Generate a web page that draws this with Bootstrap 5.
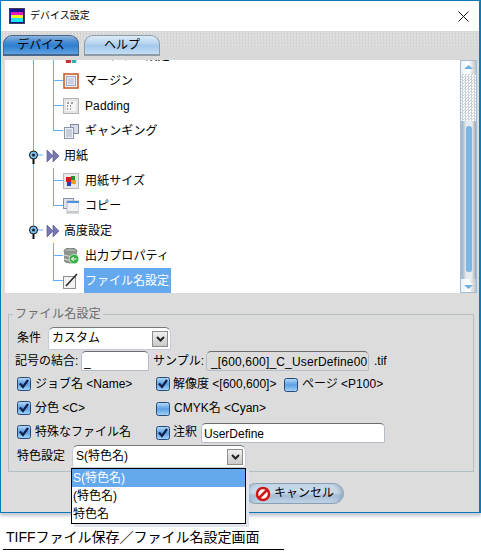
<!DOCTYPE html>
<html lang="ja">
<head>
<meta charset="utf-8">
<title>デバイス設定</title>
<link href="https://cdn.jsdelivr.net/npm/bootstrap@5.3.0/dist/css/bootstrap.min.css" rel="stylesheet">
<style>
html,body{margin:0;background:#fff}
body{width:481px;height:555px;overflow:hidden;font:12px/1.2 "Liberation Sans","Noto Sans CJK JP",sans-serif;color:#000}
.win{width:481px;height:513px;border:1px solid #0c78b4;border-right-width:2px;background:#dcdcdc;position:relative;box-shadow:0 3px 3px #c3c8d4}
.ttl{height:30px;background:#fff;padding-left:8px;gap:5px;font-size:10px}
.xbtn{margin-left:auto;margin-right:10px;width:11px;height:11px;display:block}
.tabbar{height:29px;padding:4px 0 0 2px;gap:5px;background:repeating-conic-gradient(#d3d3d3 0 25%,#e2e2e2 0 50%) 0 0/3px 3px;box-shadow:inset 0 -15px 0 #d9d9d9}
.tabx{width:76px;height:21px;border:1px solid #8e9ca8;border-bottom-width:2px;border-radius:9px 9px 0 0;font-size:12px;text-align:center;line-height:18px;background:linear-gradient(#dcecf8 0,#bcd8f0 35%,#a3c8ec 55%,#c4def4 100%)}
.tabx.on{background:linear-gradient(#8fb4dc 0,#4a8fd4 30%,#2f7fd0 55%,#5fa2e2 100%);border-color:#48678a}
.body{height:233px;padding:0 0 0 4px}
.tree{width:455px;background:#fff;overflow:hidden}
.trow{height:25px;display:flex;align-items:center;flex:none}
.trow:first-child{margin-top:-17px}
.trunk{background:linear-gradient(#62aef2,#62aef2) 28px 0/1px 100% no-repeat}
.trunk-b{background:linear-gradient(#62aef2,#62aef2) 28px 0/1px 50% no-repeat}
.elb{width:10px;height:25px;margin-left:48px;flex:none;background:linear-gradient(#62aef2,#62aef2) 0 0/1px 100% no-repeat,linear-gradient(#62aef2,#62aef2) 0 12px/100% 1px no-repeat}
.elb.end{background:linear-gradient(#62aef2,#62aef2) 0 0/1px 13px no-repeat,linear-gradient(#62aef2,#62aef2) 0 12px/100% 1px no-repeat}
.ic{width:16px;height:16px;flex:none;display:block}
.kid{height:25px;line-height:27px;margin-left:6px;letter-spacing:.1px}
.sel{background:#64a8ee;color:#fff;padding:0 2px 0 1px;margin-left:5px;letter-spacing:0}
.hnd{width:16px;height:16px;margin-left:22px;flex:none;display:block}
.tri{width:14px;height:14px;margin-left:3px;flex:none;display:block}
.par{margin-left:4px;line-height:27px;height:25px}
.sbar{width:17px;border:1px solid #a4bdd2}
.sbtn{height:13px;background:linear-gradient(90deg,#eef3f7,#fff 50%,#b8c4cc);flex:none;display:flex;align-items:center;justify-content:center}
.strack{height:47px;flex:none;background:repeating-conic-gradient(#c9d2da 0 25%,#fff 0 50%) 0 0/3px 3px}
.sthumb{flex:1;background:linear-gradient(90deg,#9db3c6,#e6ebef 30%,#e6ebef 70%,#9aa8b2);padding:5px 4px 7px;border-left:1px solid #a4bdd2}
.sgrip{height:100%;width:6px;background:#7ab6e6;border-radius:3px 3px 2px 2px;margin:0 auto}
.fs{margin:14px 6px 0 7px;height:165px;width:466px;border:1px solid #b3bfc4;padding:0 0 0 8px;position:relative;min-width:0}
.fs legend{float:none;width:auto;margin:0 0 0 -4px;padding:0 2px;font-size:12px;line-height:14px;color:#6b6b6b;display:block;letter-spacing:.3px}
.frow{display:flex;align-items:center;flex:none}
.fld{background:#fff;border:1px solid #b4bcc8;border-top-color:#6c6c6c;border-radius:5px 5px 2px 2px;height:20px;line-height:20px;padding:0 2px}
.drp{background:#fff;border:1px solid #c4ccdc;border-top-color:#777;border-radius:6px 6px 2px 2px;height:23px;display:flex;align-items:center;justify-content:space-between;padding:0 1px 0 3px}
.drp-btn{width:16px;height:16px;border:1px solid #8c8c8c;background:linear-gradient(#f0f0f0,#c9c9c9);display:flex;align-items:center;justify-content:center;flex:none;margin-right:1px}
.ckb{width:14px;height:14px;flex:none;display:block}
.cklab{margin-left:4px;white-space:nowrap}
.cklab2{margin-left:3px;white-space:nowrap}
.c1{width:139px;display:flex;align-items:center;flex:none}
.c2{width:128px;display:flex;align-items:center;flex:none}
.r1{margin-top:6px}
.r2{margin-top:1px;margin-left:-2px}
.r3{margin-top:4px;height:19px}
.r4{margin-top:5px;height:19px}
.r6{margin-top:3px}
.lab1{width:31px}
.lab2{width:66px;white-space:nowrap}
.lab3{margin:0 2px 0 4px;white-space:nowrap}
.lab6{width:55px}
.wf1{width:123px}
.wf2{width:68px}
.wf3{width:163px;background:#dcdcdc;letter-spacing:.17px;white-space:nowrap;padding:0 1px 0 4px;overflow:hidden}
.wf4{width:184px;margin-left:4px}
.wf5{width:174px}
.tifx{margin-left:5px}
.foot{margin-top:11px;padding-left:244px}
.pill{height:21px;width:99px;border:1px solid #8b9fb2;border-radius:11px;background:linear-gradient(#c4d6e8,#c8dae9 45%,#a5bed6 62%,#c2d6e8);box-shadow:inset 5px 0 4px -3px #8da7c0,inset -5px 0 4px -3px #8da7c0;font-size:12px;display:flex;align-items:center;justify-content:center;gap:3px}
.menu{position:absolute;left:70px;top:467px;width:175px;height:56px;border:1px solid #000;background:#fff;box-shadow:3px 3px 0 #dfe3ee;line-height:18px;font-size:12px}
.mi{height:18px;padding-left:1px}
.mi.act{background:#64a8ee;color:#fff}
.cap{margin:15px 0 0 3px;width:281px;height:22px;border-bottom:1px solid #000;padding-left:3px;font-size:14px;line-height:19px;white-space:nowrap}
</style>
</head>
<body>
<div class="win">
  <div class="ttl d-flex align-items-center">
    <svg class="ic" viewBox="0 0 16 16"><rect width="16" height="16" fill="#3c3c5c"/><rect x="1" y="1" width="14" height="14" fill="#14148c"/><rect x="2" y="4" width="12" height="3" fill="#e818c0"/><rect x="2" y="7" width="12" height="3" fill="#f4f020"/><rect x="2" y="10" width="12" height="4" fill="#18e8f0"/></svg>
    <span>デバイス設定</span>
    <svg class="xbtn" viewBox="0 0 11 11"><path d="M.5.5l10 10M10.500.5l-10 10" stroke="#111" fill="none"/></svg>
  </div>
  <div class="tabbar d-flex">
    <div class="tabx on">デバイス</div>
    <div class="tabx">ヘルプ</div>
  </div>
  <div class="body d-flex">
    <div class="tree d-flex flex-column">
      <div class="trow trunk"><span class="elb"></span><svg class="ic" viewBox="0 0 16 16"><rect x="2" y="2" width="12" height="12" fill="#d8d8d8"/><rect x="3" y="11" width="5" height="4" fill="#d03030"/><rect x="9" y="11" width="4" height="4" fill="#30b0b0"/></svg><span class="kid">レイアウト設定</span></div>
      <div class="trow trunk"><span class="elb"></span><svg class="ic" viewBox="0 0 16 16"><rect x="1" y="1" width="14" height="14" fill="#f4f0ec" stroke="#c8602c" stroke-width="1.600"/><rect x="3.500" y="3.500" width="9" height="9" fill="#e4e8f4" stroke="#a0a8c4"/><path d="M5 6h6M5 8h6M5 10h6" stroke="#b4bad0"/></svg><span class="kid">マージン</span></div>
      <div class="trow trunk"><span class="elb"></span><svg class="ic" viewBox="0 0 16 16"><rect x=".5" y=".5" width="15" height="15" fill="#e4e4e4" stroke="#b4b4b4"/><rect x="3" y="3" width="10" height="10" fill="#f6f6f6"/><path d="M4 5h2M8 5h2M4 8h1M7 8h1M4 11h1M7 11h1" stroke="#444"/></svg><span class="kid">Padding</span></div>
      <div class="trow trunk"><span class="elb end"></span><svg class="ic" viewBox="0 0 16 16"><rect x="7.500" y="1.500" width="8" height="9" fill="#d8dce8" stroke="#80889c"/><rect x="1.500" y="4.500" width="9" height="11" fill="#eef0f6" stroke="#8c94a8"/><path d="M3 7h6M3 9h6M3 11h6M3 13h6" stroke="#a0a8c0"/></svg><span class="kid">ギャンギング</span></div>
      <div class="trow trunk">
        <svg class="hnd" viewBox="0 0 16 16"><path d="M6.500 10v6" stroke="#111" stroke-width="2"/><circle cx="6.500" cy="7" r="4" fill="#7ec0f0" stroke="#111"/><circle cx="6.500" cy="7" r="1.500" fill="#123"/><path d="M11 7h5" stroke="#62aef2"/></svg>
        <svg class="tri" viewBox="0 0 14 14"><path d="M1 1v12l6-6zM7 1v12l6-6z" fill="#7878b0" stroke="#5c5c94" stroke-width=".7"/></svg>
        <span class="par">用紙</span>
      </div>
      <div class="trow trunk"><span class="elb"></span><svg class="ic" viewBox="0 0 16 16"><rect x=".5" y=".5" width="15" height="15" fill="#e8e8e8" stroke="#b8b8b8"/><rect x="3" y="4" width="5" height="5" fill="#d81818"/><rect x="8" y="3" width="4" height="4" fill="#2c8c30"/><rect x="8" y="7" width="5" height="4" fill="#f0a020"/><rect x="4" y="9" width="4" height="4" fill="#2040c0"/></svg><span class="kid">用紙サイズ</span></div>
      <div class="trow trunk"><span class="elb end"></span><svg class="ic" viewBox="0 0 16 16"><rect x=".5" y=".5" width="10" height="10" fill="#dfe2ec" stroke="#8890a8"/><rect x="4" y="3" width="12" height="12" fill="#f2f2f4" stroke="#b4b8c8"/><rect x="4" y="3" width="12" height="2" fill="#5090e0"/><rect x="5" y="13" width="10" height="2" fill="#c8c8c8"/></svg><span class="kid">コピー</span></div>
      <div class="trow trunk-b">
        <svg class="hnd" viewBox="0 0 16 16"><path d="M6.500 10v6" stroke="#111" stroke-width="2"/><circle cx="6.500" cy="7" r="4" fill="#7ec0f0" stroke="#111"/><circle cx="6.500" cy="7" r="1.500" fill="#123"/><path d="M11 7h5" stroke="#62aef2"/></svg>
        <svg class="tri" viewBox="0 0 14 14"><path d="M1 1v12l6-6zM7 1v12l6-6z" fill="#7878b0" stroke="#5c5c94" stroke-width=".7"/></svg>
        <span class="par">高度設定</span>
      </div>
      <div class="trow"><span class="elb"></span><svg class="ic" viewBox="0 0 16 16"><ellipse cx="7.500" cy="3" rx="6.500" ry="2.800" fill="#a8b0a8" stroke="#707870"/><rect x="1" y="3" width="13" height="10" fill="#8c948c"/><ellipse cx="7.500" cy="13" rx="6.500" ry="2.500" fill="#8c948c"/><path d="M1 7q6.500 3 13 0M1 11q6.500 3 13 0" stroke="#d8dcd8" fill="none"/><circle cx="11" cy="11" r="4.800" fill="#38b048" stroke="#d0f0d4" stroke-width=".8"/><path d="M8.500 11h5M11 9l-2.500 2 2.500 2" stroke="#fff" fill="none"/></svg><span class="kid">出力プロパティ</span></div>
      <div class="trow"><span class="elb end"></span><svg class="ic" viewBox="0 0 16 16"><rect x=".5" y="3.500" width="12" height="12" fill="#f2f2f2" stroke="#909090"/><path d="M3 13L14 1" stroke="#222" stroke-width="1.500"/></svg><span class="kid sel">ファイル名設定</span></div>
    </div>
    <div class="sbar d-flex flex-column">
      <div class="sbtn"><svg width="9" height="6" viewBox="0 0 9 6"><path d="M4.500 0L9 4H0z" fill="#6fb0e0"/><path d="M0 5h9" stroke="#fff"/></svg></div>
      <div class="strack"></div>
      <div class="sthumb"><div class="sgrip"></div></div>
      <div class="sbtn"><svg width="9" height="6" viewBox="0 0 9 6"><path d="M0 1h9" stroke="#fff"/><path d="M4.500 6L9 2H0z" fill="#6fb0e0"/></svg></div>
    </div>
  </div>
  <fieldset class="fs">
    <legend>ファイル名設定</legend>
    <div class="frow r1">
      <span class="lab1">条件</span>
      <div class="drp wf1"><span>カスタム</span><span class="drp-btn"><svg width="9" height="6" viewBox="0 0 9 6"><path d="M1 1l3.500 3.500L8 1" stroke="#222" stroke-width="2" fill="none"/></svg></span></div>
    </div>
    <div class="frow r2">
      <span class="lab2">記号の結合:</span>
      <div class="fld wf2">_</div>
      <span class="lab3">サンプル:</span>
      <div class="fld wf3">_[600,600]_C_UserDefine00</div>
      <span class="tifx">.tif</span>
    </div>
    <div class="frow r3">
      <div class="c1"><svg class="ckb" viewBox="0 0 14 14"><use href="#on"/></svg><span class="cklab">ジョブ名 &lt;Name&gt;</span></div>
      <div class="c2"><svg class="ckb" viewBox="0 0 14 14"><use href="#on"/></svg><span class="cklab2">解像度 &lt;[600,600]&gt;</span></div>
      <svg class="ckb" viewBox="0 0 14 14"><use href="#off"/></svg><span class="cklab">ページ &lt;P100&gt;</span>
    </div>
    <div class="frow r4">
      <div class="c1"><svg class="ckb" viewBox="0 0 14 14"><use href="#on"/></svg><span class="cklab">分色 &lt;C&gt;</span></div>
      <svg class="ckb" viewBox="0 0 14 14"><use href="#off"/></svg><span class="cklab">CMYK名 &lt;Cyan&gt;</span>
    </div>
    <div class="frow r4">
      <div class="c1"><svg class="ckb" viewBox="0 0 14 14"><use href="#on"/></svg><span class="cklab">特殊なファイル名</span></div>
      <svg class="ckb" viewBox="0 0 14 14"><use href="#on"/></svg><span class="cklab2">注釈</span>
      <div class="fld wf4">UserDefine</div>
    </div>
    <div class="frow r6">
      <span class="lab6">特色設定</span>
      <div class="drp wf5"><span>S(特色名)</span><span class="drp-btn"><svg width="9" height="6" viewBox="0 0 9 6"><path d="M1 1l3.500 3.500L8 1" stroke="#222" stroke-width="2" fill="none"/></svg></span></div>
    </div>
  </fieldset>
  <div class="foot d-flex">
    <div class="pill">
      <svg width="16" height="16" viewBox="0 0 16 16"><circle cx="8" cy="8" r="6" fill="#fff" stroke="#d01818" stroke-width="2.500"/><path d="M3.500 12.500l9-9" stroke="#d01818" stroke-width="2.500"/></svg>
      <span>キャンセル</span>
    </div>
  </div>
  <div class="menu">
    <div class="mi act">S(特色名)</div>
    <div class="mi">(特色名)</div>
    <div class="mi">特色名</div>
  </div>
</div>
<div class="cap">TIFFファイル保存／ファイル名設定画面</div>
<svg width="0" height="0" class="d-block">
  <defs>
    <linearGradient id="bg" x1="0" y1="0" x2="0" y2="1"><stop offset="0" stop-color="#b8dcf8"/><stop offset=".5" stop-color="#5a9fe4"/><stop offset="1" stop-color="#a8d4f8"/></linearGradient>
    <symbol id="off" viewBox="0 0 14 14"><rect x=".5" y=".5" width="13" height="13" rx="2" fill="url(#bg)" stroke="#2a4a78"/></symbol>
    <symbol id="on" viewBox="0 0 14 14"><rect x=".5" y=".5" width="13" height="13" rx="2" fill="url(#bg)" stroke="#2a4a78"/><path d="M3 6.500l3 3.500 5-7" stroke="#10204a" stroke-width="2.200" fill="none"/></symbol>
  </defs>
</svg>
</body>
</html>
